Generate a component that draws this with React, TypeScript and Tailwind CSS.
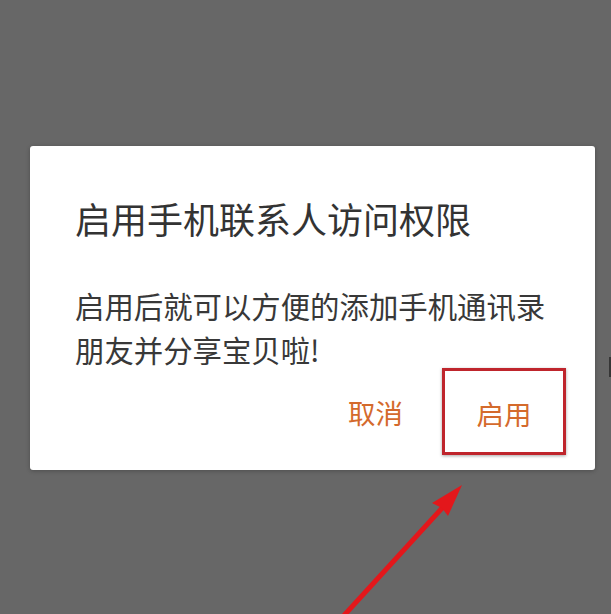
import React from 'react';

const cjk = { fontFamily: '"Noto Sans CJK SC", "Noto Sans", sans-serif' };

function Arrow() {
  // red annotation arrow pointing at the 启用 button
  return (
    <svg
      className="pointer-events-none absolute left-0 top-0"
      width={611}
      height={614}
      viewBox="0 0 611 614"
    >
      <line x1={338} y1={622} x2={444} y2={506} stroke="#e3171b" strokeWidth={5} strokeLinecap="round" />
      <polygon points="462,485 448,516 442,508 432,503" fill="#e3171b" />
    </svg>
  );
}

export default function App() {
  return (
    <div className="relative h-[614px] w-[611px] overflow-hidden bg-[#676767]" style={cjk}>
      <div className="pl-[30px] pt-[146px]">
        <div className="flex h-[324px] w-[565px] flex-col rounded-[3px] bg-white pl-[45px] pr-[29px] pt-[54px] shadow-[0_1px_4px_rgba(0,0,0,0.25)]">
          <h1 className="text-[36px] leading-[36px] font-normal text-[#333333]">启用手机联系人访问权限</h1>
          <p className="mt-[47px] w-[480px] text-[29.4px] leading-[44px] text-[#383838]">
            启用后就可以方便的添加手机通讯录朋友并分享宝贝啦!
          </p>
          <div className="mt-[-3px] flex items-center justify-end">
            <button className="text-[27.5px] leading-[28px] text-[#d46a2c]">取消</button>
            <button className="ml-[39px] flex h-[87px] w-[124px] items-center justify-center border-[3px] border-[#bf252c] pt-[2px] text-[27.5px] leading-[28px] text-[#d46a2c] shadow-[0_1px_3px_rgba(0,0,0,0.35)]">
              启用
            </button>
          </div>
        </div>
      </div>
      <div className="absolute left-[609px] top-[357px] h-[20px] w-[2px] bg-[#363636]" />
      <Arrow />
    </div>
  );
}
